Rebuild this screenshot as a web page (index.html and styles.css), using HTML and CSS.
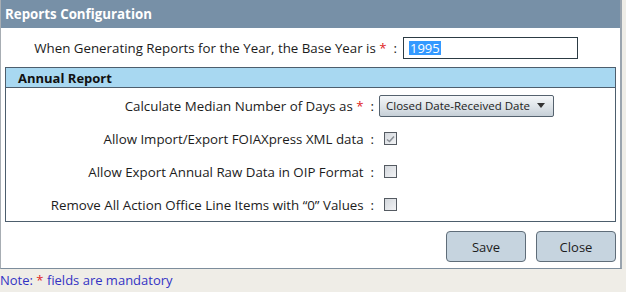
FILE: index.html
```html
<!DOCTYPE html>
<html>
<head>
<meta charset="utf-8">
<link rel="stylesheet" href="styles.css">
</head>
<body>
<div class="panel">
  <div class="title">Reports Configuration</div>
  <div class="base-row">
    <div class="base-label">When Generating Reports for the Year, the Base Year is <span class="req">*</span>&nbsp; :</div>
    <div class="text-input"><span class="sel">1995</span></div>
  </div>
  <div class="annual">
    <div class="legend">Annual Report</div>
    <div class="rows">
      <div class="row">
        <div class="label">Calculate Median Number of Days as <span class="req">*</span>&nbsp; :</div>
        <div class="select">
          <span>Closed Date-Received Date</span>
          <svg class="arrow" width="8" height="5" viewBox="0 0 8 5"><path d="M0 0 H8 L4 5 Z" fill="#333"/></svg>
        </div>
      </div>
      <div class="row">
        <div class="label">Allow Import/Export FOIAXpress XML data &nbsp;:</div>
        <div class="check">
          <svg width="9" height="8" viewBox="0 0 9 8"><path d="M1 4.5 L3.5 6.5 L8 1.5" fill="none" stroke="#8a8f96" stroke-width="1.6"/></svg>
        </div>
      </div>
      <div class="row">
        <div class="label">Allow Export Annual Raw Data in OIP Format &nbsp;:</div>
        <div class="check"></div>
      </div>
      <div class="row">
        <div class="label">Remove All Action Office Line Items with “0” Values &nbsp;:</div>
        <div class="check"></div>
      </div>
    </div>
  </div>
  <div class="actions">
    <button class="btn">Save</button>
    <button class="btn">Close</button>
  </div>
</div>
<div class="note">Note: <span class="req">*</span> fields are mandatory</div>
</body>
</html>
```
FILE: styles.css
```css
html, body {
  margin: 0;
  padding: 0;
}
body {
  background: #efede7;
  font-family: "Open Sans", "Liberation Sans", sans-serif;
  font-size: 13.3px;
  color: #1c1c1c;
  width: 626px;
  height: 292px;
  overflow: hidden;
}
.panel {
  width: 619px;
  background: #ffffff;
  border-left: 1px solid #a7adb3;
  border-right: 2px solid #9aa4ae;
  border-bottom: 1px solid #7d8d9c;
  padding-bottom: 6px;
}
.title {
  height: 28px;
  box-sizing: border-box;
  background: #7790a7;
  color: #ffffff;
  font-weight: bold;
  font-size: 13.3px;
  line-height: 28px;
  padding-left: 4px;
}
.base-row {
  display: flex;
  align-items: center;
  height: 39px;
}
.base-label {
  width: 396px;
  text-align: right;
  white-space: nowrap;
}
.req {
  color: #e02424;
}
.text-input {
  margin-left: 6px;
  width: 175px;
  height: 22px;
  box-sizing: border-box;
  border: 1px solid #2c3b44;
  display: flex;
  align-items: center;
  padding-left: 5px;
  font-size: 13px;
}
.sel {
  background: #3399ff;
  color: #ffffff;
  line-height: 14px;
  padding: 0 1px;
}
.annual {
  margin: 0 4px 0 4px;
  border: 1px solid #4d5e6d;
}
.legend {
  height: 20px;
  box-sizing: border-box;
  background: #a8d8f1;
  border-bottom: 1px solid #4d5e6d;
  font-weight: bold;
  font-size: 13px;
  line-height: 20px;
  padding-left: 12px;
  color: #111;
}
.rows {
  padding-top: 1px;
}
.row {
  display: flex;
  align-items: center;
  height: 33px;
}
.label {
  width: 368px;
  text-align: right;
  white-space: nowrap;
}
.select {
  margin-left: 5px;
  width: 175px;
  height: 22px;
  box-sizing: border-box;
  border: 1px solid #55626e;
  border-radius: 2px;
  background: linear-gradient(#f5f7f9, #dde3e8 55%, #c6cfd7);
  display: flex;
  align-items: center;
  padding: 0 8px 0 6px;
  color: #222;
  font-size: 11.5px;
  white-space: nowrap;
}
.arrow {
  margin-left: auto;
  flex: none;
}
.check {
  margin-left: 10px;
  width: 13px;
  height: 13px;
  box-sizing: border-box;
  border: 1px solid #555b62;
  background: linear-gradient(135deg, #d3d7dc, #f2f3f5);
  display: flex;
  align-items: center;
  justify-content: center;
}
.actions {
  display: flex;
  justify-content: flex-end;
  gap: 10px;
  padding: 9px 4px 0 0;
}
.btn {
  width: 80px;
  height: 31px;
  background: #c6d4df;
  border: 1px solid #5f6d79;
  border-radius: 4px;
  font-family: "Open Sans", "Liberation Sans", sans-serif;
  font-size: 13px;
  color: #1c1c1c;
  padding: 0;
}
.note {
  color: #3333c4;
  font-size: 13px;
  line-height: 22px;
  padding-left: 0;
}
```
